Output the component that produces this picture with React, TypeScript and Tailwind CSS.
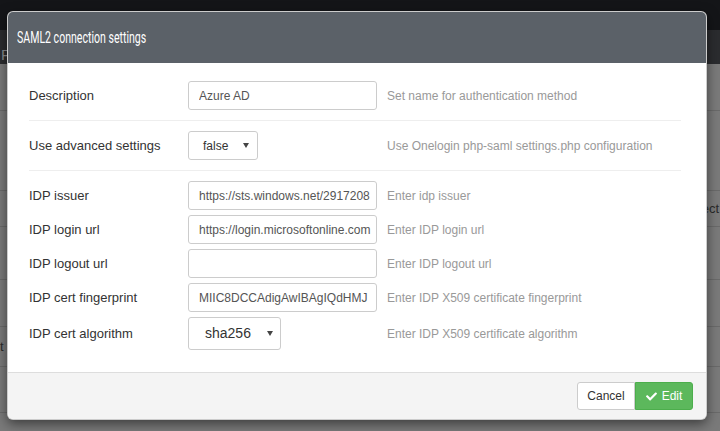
import React from "react";

function Caret() {
  return (
    <svg width="6" height="5" viewBox="0 0 6 5" className="shrink-0">
      <polygon points="0,0 6,0 3,5" fill="#444" />
    </svg>
  );
}

function TextBox({ value }: { value: string }) {
  return (
    <div className="w-[189px] h-[29px] shrink-0 border border-[#ccc] rounded-[3px] bg-white pl-[10px] pr-[3px] flex items-center overflow-hidden">
      <span className="block w-full whitespace-nowrap text-[12px] text-[#555] overflow-hidden">{value}</span>
    </div>
  );
}

function Row({ label, children, help }: { label: string; children: React.ReactNode; help: string }) {
  return (
    <div className="flex items-center">
      <div className="w-[159px] shrink-0 text-[13px] text-[#333]">{label}</div>
      {children}
      <div className="ml-[10px] text-[12px] text-[#999] whitespace-nowrap">{help}</div>
    </div>
  );
}

export default function App() {
  const bgRows = [47, 80, 36, 53, 47, 40, 46];
  return (
    <div className="relative w-[720px] h-[431px] overflow-hidden bg-[#7a7a7a] font-['Liberation_Sans',Arial,sans-serif]">
      {/* page behind the modal */}
      <div className="flex flex-col">
        <div className="h-[30px] bg-[#141518] pl-[147px] pt-[6px] text-[15px] text-[#3e4043] whitespace-nowrap">
          / administration / authentication methods
        </div>
        <div className="h-[34px] bg-[#2b2c2f] text-[15px] text-[#8a8b8e] pt-[14px] pl-[1px]">P</div>
        {bgRows.map((h, i) => (
          <div
            key={i}
            style={{ height: h }}
            className="border-b border-[#6a6a6a] flex items-center justify-between text-[13px] text-[#2a2a2a]"
          >
            <span>{i === 5 ? "t" : ""}</span>
            <span className="pr-[1px]">{i === 2 ? "ect" : ""}</span>
          </div>
        ))}
      </div>

      {/* modal */}
      <div className="absolute left-[7px] top-[11px] w-[700px] rounded-[6px] bg-white overflow-hidden border border-[rgba(0,0,0,0.2)] shadow-[0_4px_12px_rgba(0,0,0,0.5)]">
        <div className="h-[51px] bg-[#5b6168] pl-[9px] flex items-center">
          <span className="inline-block origin-left scale-x-[0.66] text-white text-[16px] font-normal font-['Roboto',sans-serif] whitespace-nowrap">
            SAML2 connection settings
          </span>
        </div>

        <div className="pt-[18px] pb-[22px] pl-[21px] pr-[25px] flex flex-col">
          <Row label="Description" help="Set name for authentication method">
            <TextBox value="Azure AD" />
          </Row>
          <div className="my-[10px] border-t border-[#eee]" />
          <Row label="Use advanced settings" help="Use Onelogin php-saml settings.php configuration">
            <div className="w-[70px] h-[29px] shrink-0 border border-[#ccc] rounded-[3px] bg-white pl-[14px] pr-[8px] flex items-center justify-between">
              <span className="text-[12px] text-[#333]">false</span>
              <Caret />
            </div>
            <div className="w-[119px] shrink-0" />
          </Row>
          <div className="my-[10px] border-t border-[#eee]" />
          <div className="flex flex-col gap-[5px]">
            <Row label="IDP issuer" help="Enter idp issuer">
              <TextBox value="https://sts.windows.net/2917208" />
            </Row>
            <Row label="IDP login url" help="Enter IDP login url">
              <TextBox value="https://login.microsoftonline.com" />
            </Row>
            <Row label="IDP logout url" help="Enter IDP logout url">
              <TextBox value="" />
            </Row>
            <Row label="IDP cert fingerprint" help="Enter IDP X509 certificate fingerprint">
              <TextBox value="MIIC8DCCAdigAwIBAgIQdHMJ" />
            </Row>
            <Row label="IDP cert algorithm" help="Enter IDP X509 certificate algorithm">
              <div className="w-[93px] h-[33px] shrink-0 border border-[#ccc] rounded-[3px] bg-white pl-[16px] pr-[7px] flex items-center justify-between">
                <span className="text-[14px] text-[#333]">sha256</span>
                <Caret />
              </div>
              <div className="w-[96px] shrink-0" />
            </Row>
          </div>
        </div>

        <div className="border-t border-[#ddd] bg-[#f4f4f4] pt-[9px] pb-[9px] pr-[13px] flex justify-end">
          <div className="flex">
            <div className="w-[58px] h-[28px] bg-white border border-[#ccc] rounded-l-[3px] flex items-center justify-center text-[12px] text-[#333]">
              Cancel
            </div>
            <div className="w-[58px] h-[28px] bg-[#5cb85c] border border-[#4cae4c] rounded-r-[3px] flex items-center justify-center gap-[5px] text-[12px] text-white">
              <svg width="11" height="11" viewBox="0 0 512 512">
                <path
                  fill="#fff"
                  d="M173.898 439.404l-166.4-166.4c-9.997-9.997-9.997-26.206 0-36.204l36.203-36.204c9.997-9.998 26.207-9.998 36.204 0L192 312.69 432.095 72.596c9.997-9.997 26.207-9.997 36.204 0l36.203 36.204c9.997 9.997 9.997 26.206 0 36.204l-294.4 294.401c-9.998 9.997-26.207 9.997-36.204-.001z"
                />
              </svg>
              <span>Edit</span>
            </div>
          </div>
        </div>
      </div>
    </div>
  );
}
